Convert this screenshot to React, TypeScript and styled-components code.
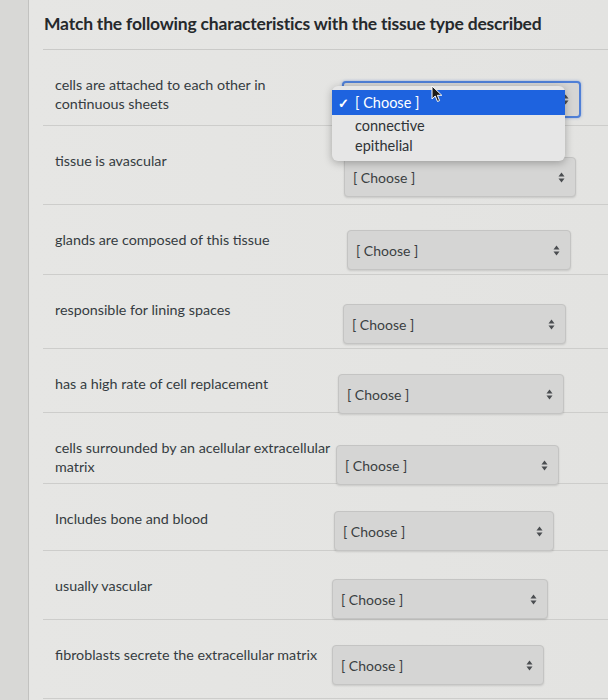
import React from 'react'
import styled, { createGlobalStyle } from 'styled-components'

const GlobalStyle = createGlobalStyle`
  html, body {
    margin: 0;
    padding: 0;
    background: #e3e3e1;
  }
  body {
    font-family: Lato, 'Open Sans', 'Noto Sans', sans-serif;
    color: #2d3b45;
  }
`

const Page = styled.div`
  width: 608px;
  height: 700px;
  overflow: hidden;
  background: linear-gradient(90deg, #d8d8d6 0px, #d8d8d6 28px, #e6e6e4 28px, #e3e3e1 100%);
`

const Panel = styled.div`
  margin-left: 28px;
  border-left: 1px solid #c2c2c0;
  min-height: 700px;
  padding-left: 14px;
`

const Title = styled.h1`
  margin: 0;
  padding: 13px 0 0 1px;
  height: 36px;
  font-size: 17.5px;
  font-weight: 700;
  letter-spacing: -0.2px;
  color: #25292c;
  border-bottom: 1px solid #cacac8;
`

const Row = styled.div<{ $h: number }>`
  display: grid;
  grid-template-columns: 285px 1fr;
  height: ${p => p.$h}px;
  box-sizing: border-box;
  padding: 25px 0 0 12px;
  border-bottom: 1px solid #cdcdcb;
`

const Prompt = styled.div<{ $maxW?: number }>`
  font-size: 14.3px;
  line-height: 19px;
  color: #353c41;
  padding-right: 4px;
  max-width: ${p => (p.$maxW ? `${p.$maxW}px` : 'none')};
`

const SelectWrap = styled.div<{ $shift: number; $top: number; $w: number }>`
  position: relative;
  width: ${p => p.$w}px;
  margin-left: ${p => p.$shift}px;
  margin-top: ${p => p.$top}px;
`

const SelectBox = styled.div<{ $focused?: boolean }>`
  display: flex;
  align-items: center;
  justify-content: space-between;
  height: ${p => (p.$focused ? 37 : 40)}px;
  box-sizing: border-box;
  padding: 0 10px 0 8px;
  border-radius: 4px;
  background: #d5d5d4;
  border: ${p => (p.$focused ? '2px solid #4f7fd6' : '1px solid #c4c4c3')};
  box-shadow: ${p =>
    p.$focused ? '0 0 3px rgba(60,110,210,0.5)' : '0 1px 2px rgba(0,0,0,0.12)'};
  font-size: 14px;
  color: #3b3f42;
`

const Menu = styled.div`
  position: absolute;
  left: -10px;
  top: 5px;
  width: 233px;
  padding: 4px 0 6px;
  background: #e6e6e6;
  border-radius: 6px;
  box-shadow: 0 2px 8px rgba(0, 0, 0, 0.28);
  z-index: 2;
`

const MenuItem = styled.div<{ $active?: boolean }>`
  display: flex;
  align-items: center;
  height: ${p => (p.$active ? 25 : 20)}px;
  padding-left: 6px;
  font-size: 14.5px;
  color: ${p => (p.$active ? '#ffffff' : '#2f3336')};
  background: ${p => (p.$active ? '#1e63df' : 'transparent')};
`

const Check = styled.span`
  width: 17px;
  font-size: 13px;
  font-weight: 700;
`

const Cursor = styled.svg`
  position: absolute;
  left: 89px;
  top: 4px;
  z-index: 3;
`

const Arrows = () => (
  <svg width="7" height="11" viewBox="0 0 7 11">
    <path d="M3.5 0.5 L6.5 4.5 H0.5 Z" fill="#4a4d50" />
    <path d="M3.5 10.5 L6.5 6.5 H0.5 Z" fill="#4a4d50" />
  </svg>
)

const rows = [
  { text: 'cells are attached to each other in continuous sheets', h: 76, shift: 2, top: 6, w: 239, open: true, maxW: 240 },
  { text: 'tissue is avascular', h: 79, shift: 4, top: 6, w: 232 },
  { text: 'glands are composed of this tissue', h: 70, shift: 7, top: 0, w: 224 },
  { text: 'responsible for lining spaces', h: 74, shift: 3, top: 4, w: 223 },
  { text: 'has a high rate of cell replacement', h: 64, shift: -2, top: 0, w: 226 },
  { text: 'cells surrounded by an acellular extracellular matrix', h: 71, shift: -4, top: 7, w: 223 },
  { text: 'Includes bone and blood', h: 67, shift: -6, top: 2, w: 220 },
  { text: 'usually vascular', h: 69, shift: -8, top: 3, w: 216 },
  { text: 'fibroblasts secrete the extracellular matrix', h: 79, shift: -8, top: 0, w: 212 },
]

const App: React.FC = () => (
  <>
    <GlobalStyle />
    <Page>
      <Panel>
        <Title>Match the following characteristics with the tissue type described</Title>
        {rows.map(r => (
          <Row key={r.text} $h={r.h}>
            <Prompt $maxW={r.maxW}>{r.text}</Prompt>
            <SelectWrap $shift={r.shift} $top={r.top} $w={r.w}>
              <SelectBox $focused={r.open}>
                <span>[ Choose ]</span>
                <Arrows />
              </SelectBox>
              {r.open && (
                <>
                  <Menu>
                    <MenuItem $active>
                      <Check>✓</Check>[ Choose ]
                    </MenuItem>
                    <MenuItem>
                      <Check />connective
                    </MenuItem>
                    <MenuItem>
                      <Check />epithelial
                    </MenuItem>
                  </Menu>
                  <Cursor width="12" height="18" viewBox="0 0 12 18">
                    <path
                      d="M1 1 L1 14 L4.2 11 L6.5 16.5 L8.6 15.6 L6.4 10.3 L10.8 10.3 Z"
                      fill="#1b1b1b"
                      stroke="#ffffff"
                      strokeWidth="1"
                    />
                  </Cursor>
                </>
              )}
            </SelectWrap>
          </Row>
        ))}
      </Panel>
    </Page>
  </>
)

export default App
